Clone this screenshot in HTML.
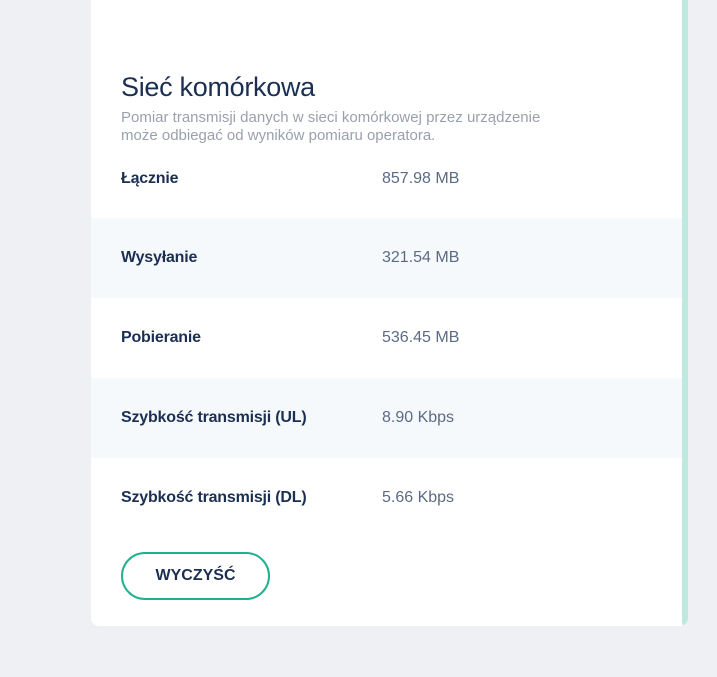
<!DOCTYPE html>
<html><head><meta charset="utf-8">
<style>
html,body{margin:0;padding:0;width:717px;height:677px;background:#eff0f4;overflow:hidden;font-family:"Liberation Sans",sans-serif;}
.card{position:absolute;left:91px;top:-20px;width:597px;height:646px;background:#fff;border-radius:0 0 8px 8px;overflow:hidden;}
.bar{position:absolute;right:0;top:0;width:6px;height:100%;background:#bfe9df;border-radius:0 0 3px 3px;}
h1{position:absolute;left:30px;top:92px;margin:0;font-size:27px;font-weight:normal;color:#1b2f52;letter-spacing:-0.3px;}
.desc{position:absolute;left:30px;top:129px;font-size:15px;line-height:18px;color:#9aa0ac;white-space:nowrap;}
.row{position:absolute;left:0;width:591px;height:80px;}
.row.s{background:#f6f9fc;}
.lab{position:absolute;left:30px;top:31px;font-size:16px;font-weight:bold;color:#1b2f52;letter-spacing:-0.2px;}
.val{position:absolute;left:291px;top:31px;font-size:16px;color:#5b6b85;}
.btn{position:absolute;left:30px;top:572px;width:145px;height:44px;border:2px solid #1eb08f;border-radius:24px;text-align:center;line-height:44px;font-size:16px;font-weight:bold;color:#1b2f52;}
</style></head><body>
<div class="card">
<div class="bar"></div>
<h1>Sieć komórkowa</h1>
<div class="desc">Pomiar transmisji danych w sieci komórkowej przez urządzenie<br>może odbiegać od wyników pomiaru operatora.</div>
<div class="row" style="top:158px"><div class="lab" style="top:32px">Łącznie</div><div class="val" style="top:32px">857.98 MB</div></div>
<div class="row s" style="top:238px"><div class="lab">Wysyłanie</div><div class="val">321.54 MB</div></div>
<div class="row" style="top:318px"><div class="lab">Pobieranie</div><div class="val">536.45 MB</div></div>
<div class="row s" style="top:398px"><div class="lab">Szybkość transmisji (UL)</div><div class="val">8.90 Kbps</div></div>
<div class="row" style="top:478px"><div class="lab">Szybkość transmisji (DL)</div><div class="val">5.66 Kbps</div></div>
<div class="btn">WYCZYŚĆ</div>
</div>
</body></html>
